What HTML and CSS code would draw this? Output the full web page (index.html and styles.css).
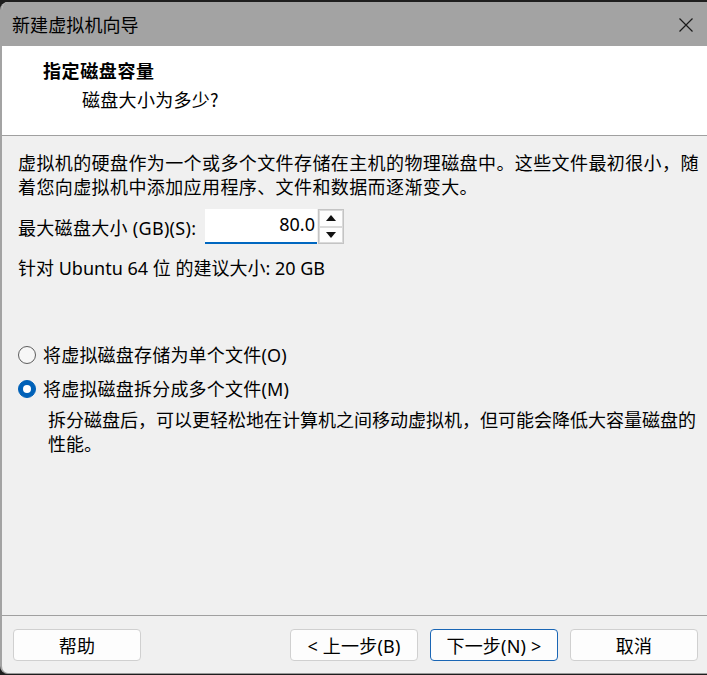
FILE: index.html
```html
<!DOCTYPE html>
<html lang="zh-CN">
<head>
<meta charset="utf-8">
<title>新建虚拟机向导</title>
<link rel="stylesheet" href="styles.css">
</head>
<body>
<div class="window">
  <div class="titlebar">
    <span class="title">新建虚拟机向导</span>
    <svg class="close" width="16" height="16" viewBox="0 0 16 16"><path d="M1.5 1.5 L14.5 14.5 M14.5 1.5 L1.5 14.5" stroke="#1a1a1a" stroke-width="1.2" fill="none"/></svg>
  </div>
  <div class="header">
    <div class="h-title">指定磁盘容量</div>
    <div class="h-sub">磁盘大小为多少?</div>
  </div>
  <div class="content">
    <p class="desc">虚拟机的硬盘作为一个或多个文件存储在主机的物理磁盘中。这些文件最初很小，随<br>着您向虚拟机中添加应用程序、文件和数据而逐渐变大。</p>
    <div class="size-row">
      <span class="label">最大磁盘大小 (GB)(S):</span>
      <div class="spin">
        <div class="spin-input">80.0</div>
        <div class="spin-btns">
          <div class="spin-btn"><svg width="10" height="6" viewBox="0 0 10 6"><path d="M0 6 L5 0 L10 6 Z" fill="#111"/></svg></div>
          <div class="spin-btn"><svg width="10" height="6" viewBox="0 0 10 6"><path d="M0 0 L5 6 L10 0 Z" fill="#111"/></svg></div>
        </div>
      </div>
    </div>
    <p class="rec">针对 Ubuntu 64 位 的建议大小: 20 GB</p>
    <div class="radios">
      <div class="radio-row"><span class="radio"></span><span>将虚拟磁盘存储为单个文件(O)</span></div>
      <div class="radio-row"><span class="radio checked"></span><span>将虚拟磁盘拆分成多个文件(M)</span></div>
      <p class="note">拆分磁盘后，可以更轻松地在计算机之间移动虚拟机，但可能会降低大容量磁盘的<br>性能。</p>
    </div>
  </div>
  <div class="footer">
    <div class="btn">帮助</div>
    <div class="spacer"></div>
    <div class="btn">&lt; 上一步(B)</div>
    <div class="btn primary">下一步(N) &gt;</div>
    <div class="btn">取消</div>
  </div>
</div>
</body>
</html>
```

FILE: styles.css
```css
* { box-sizing: border-box; }
html, body {
  margin: 0;
  padding: 0;
  background: #1e1e1e;
  width: 707px;
  height: 675px;
  overflow: hidden;
}
body {
  font-family: "Noto Sans", "Noto Sans CJK SC", sans-serif;
  font-size: 18px;
  color: #000;
}
.window {
  margin-top: 2px;
  height: 672px;
  display: flex;
  flex-direction: column;
  background: #f0f0f0;
  border-left: 2px solid #a3a3a3;
  border-bottom: 1px solid #9a9a9a;
  border-radius: 8px 0 0 8px;
  overflow: hidden;
}
.titlebar {
  height: 44px;
  flex: none;
  background: #a3a3a3;
  display: flex;
  align-items: center;
  justify-content: space-between;
  padding: 0 13px 0 12px;
  margin-left: -2px;
}
.title {
  font-family: "Noto Sans CJK SC", sans-serif;
  font-size: 18px;
  line-height: 24px;
  letter-spacing: 0.1px;
}
.close { display: block; margin-top: 2px; }
.header {
  height: 90px;
  flex: none;
  background: #fff;
  border-bottom: 1px solid #a0a0a0;
  padding: 12px 0 0 41px;
  font-family: "Noto Sans CJK SC", sans-serif;
}
.h-title {
  font-weight: bold;
  font-size: 18px;
  line-height: 24px;
  letter-spacing: 0.6px;
}
.h-sub {
  font-size: 18px;
  line-height: 24px;
  margin-top: 5px;
  padding-left: 39px;
  letter-spacing: 0.3px;
}
.content {
  flex: 1;
  padding: 15px 0 0 16px;
}
.desc, .note {
  margin: 0;
  line-height: 24px;
  letter-spacing: 0.4px;
  white-space: nowrap;
}
.size-row {
  display: flex;
  align-items: center;
  margin-top: 10px;
  height: 35px;
}
.label { letter-spacing: 0.3px; width: 187px; flex: none; }
.spin { display: flex; height: 35px; }
.spin-input {
  width: 112px;
  height: 35px;
  background: #fff;
  border-bottom: 2px solid #0067c0;
  text-align: right;
  padding: 2px 2px 0 0;
  line-height: 26px;
  font-size: 18px;
}
.spin-btns {
  width: 26px;
  display: flex;
  flex-direction: column;
  border: 1px solid #c4c4c4;
  margin-left: 1px;
  background: #e8e8e8;
}
.spin-btn {
  flex: 1;
  display: flex;
  align-items: center;
  justify-content: center;
  background: #fdfdfd;
  border: 1px solid #dadada;
}
.rec {
  margin: 12px 0 0 0;
  line-height: 24px;
  letter-spacing: 0;
}
.radios { margin-top: 63px; }
.radio-row {
  display: flex;
  align-items: center;
  height: 24px;
  line-height: 24px;
  margin-bottom: 10px;
  letter-spacing: 0.2px;
}
.radio {
  width: 18px;
  height: 18px;
  border-radius: 50%;
  border: 1px solid #5d5d5d;
  background: #f7f7f7;
  margin: 0 7px 0 0;
  flex: none;
}
.radio.checked {
  background: #0061b8;
  border-color: #0061b8;
  display: flex;
  align-items: center;
  justify-content: center;
}
.radio.checked::after {
  content: "";
  width: 8px;
  height: 8px;
  border-radius: 50%;
  background: #fff;
}
.note { padding-left: 30px; margin-top: -3px; letter-spacing: 0; }
.footer {
  height: 58px;
  flex: none;
  border-top: 1px solid #a0a0a0;
  display: flex;
  align-items: flex-start;
  padding: 13px 9px 0 11px;
  gap: 12px;
}
.spacer { flex: 1; }
.btn {
  width: 128px;
  height: 32px;
  background: #fdfdfd;
  border: 1px solid #d0d0d0;
  border-radius: 4px;
  display: flex;
  align-items: center;
  justify-content: center;
  font-size: 18px;
  letter-spacing: 0.2px;
}
.btn.primary { border-color: #1a66b5; }
```
